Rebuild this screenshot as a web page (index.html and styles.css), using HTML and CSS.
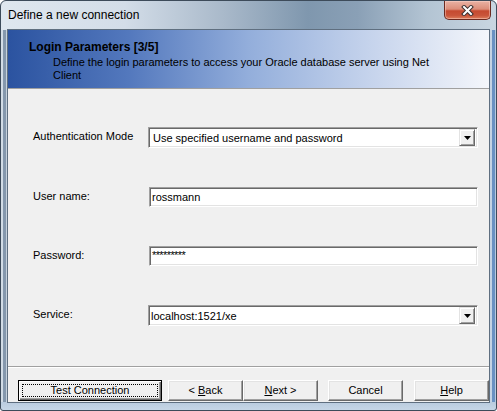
FILE: index.html
```html
<!DOCTYPE html>
<html>
<head>
<meta charset="utf-8">
<link rel="stylesheet" href="styles.css">
</head>
<body>
<div class="window">
  <div class="titlebar">
    <span class="title">Define a new connection</span>
    <div class="close">
      <svg width="13" height="11" viewBox="0 0 13 11">
        <path d="M3 2 L10 9 M10 2 L3 9" stroke="#3b3030" stroke-width="4" stroke-linecap="square" fill="none"/>
        <path d="M3 2 L10 9 M10 2 L3 9" stroke="#ffffff" stroke-width="2" stroke-linecap="square" fill="none"/>
      </svg>
    </div>
  </div>
  <div class="client">
    <div class="header">
      <div class="h-title">Login Parameters [3/5]</div>
      <div class="h-sub">Define the login parameters to access your Oracle database server using Net Client</div>
    </div>
    <div class="form">
      <div class="row">
        <span class="label">Authentication Mode</span>
        <div class="combo">
          <span class="value">Use specified username and password</span>
          <span class="drop"><svg width="7" height="4" viewBox="0 0 7 4"><polygon points="0,0 7,0 3.5,4" fill="#000"/></svg></span>
        </div>
      </div>
      <div class="row">
        <span class="label">User name:</span>
        <div class="edit"><span class="value">rossmann</span></div>
      </div>
      <div class="row">
        <span class="label">Password:</span>
        <div class="edit"><span class="value pw">*********</span></div>
      </div>
      <div class="row">
        <span class="label">Service:</span>
        <div class="combo">
          <span class="value svc">localhost:1521/xe</span>
          <span class="drop"><svg width="7" height="4" viewBox="0 0 7 4"><polygon points="0,0 7,0 3.5,4" fill="#000"/></svg></span>
        </div>
      </div>
    </div>
    <div class="sep"></div>
    <div class="buttons">
      <div class="btn default wide"><span class="focus">Test Connection</span></div>
      <div class="btn back"><span>&lt; <u>B</u>ack</span></div>
      <div class="btn"><span><u>N</u>ext &gt;</span></div>
      <div class="btn cancel"><span>Cancel</span></div>
      <div class="btn help"><span><u>H</u>elp</span></div>
    </div>
  </div>
</div>
</body>
</html>
```
FILE: styles.css
```css
* { box-sizing: border-box; }
html, body { margin: 0; padding: 0; }
body {
  width: 497px;
  height: 411px;
  overflow: hidden;
  font-family: "Liberation Sans", Arial, sans-serif;
  font-size: 11px;
  color: #000;
  background: #ffffff;
}

.window {
  width: 497px;
  height: 411px;
  border: 1px solid #3d4b5a;
  border-radius: 6px 6px 3px 3px;
  padding: 0 6px 7px 6px;
  display: flex;
  flex-direction: column;
  background:
    linear-gradient(to right, #dfe7ef 0%, #d3dde8 25%, #a9b9ca 45%, #7f97ae 62%, #8aa0b6 72%, #b3c4d3 86%, #c9d6e1 100%) top left / 100% 29px no-repeat,
    linear-gradient(to bottom, #b9cbde 0%, #c6d6e6 100%) bottom left / 100% 8px no-repeat,
    linear-gradient(to right, #d2dce6 0 2px, #8598ad 2px 5px, #c5d1dd 5px 6px, transparent 6px calc(100% - 6px), #c4d3e3 calc(100% - 6px) calc(100% - 4px), #6a91c2 calc(100% - 4px) calc(100% - 1px), #b7cae0 calc(100% - 1px)),
    #b9c8d7;
}

.titlebar {
  height: 28px;
  display: flex;
  align-items: flex-start;
}
.title {
  font-size: 12px;
  line-height: 14px;
  padding: 7px 0 0 1px;
  color: #000;
}
.close {
  margin-left: auto;
  margin-right: -1px;
  width: 47px;
  height: 19px;
  border: 1px solid #6b2a20;
  border-top: none;
  border-radius: 0 0 5px 5px;
  background: linear-gradient(to bottom, #e9b2a4 0%, #dc8e7a 45%, #c54a30 55%, #c9553a 80%, #dd7e5c 100%);
  box-shadow: inset 0 0 0 1px rgba(255, 220, 210, 0.45);
  display: flex;
  align-items: center;
  justify-content: center;
}

.client {
  flex: 1;
  border: 1px solid #5f6f80;
  background: #f0f0f0;
  display: flex;
  flex-direction: column;
}

.header {
  height: 59px;
  border-bottom: 1px solid #a0a0a0;
  background: linear-gradient(to right, #2b53a0 0%, #5378bd 25%, #93aedb 50%, #c5d3ec 75%, #f4f6fb 100%);
  padding: 10px 0 0 21px;
}
.h-title {
  font-weight: bold;
  font-size: 12px;
  line-height: 14px;
}
.h-sub {
  margin: 2px 0 0 24px;
  width: 378px;
  line-height: 13px;
}

.form {
  flex: 1;
  padding: 38px 0 0 25px;
  display: flex;
  flex-direction: column;
  gap: 39px;
}
.row {
  display: flex;
  align-items: center;
}
.label {
  width: 115px;
  line-height: 13px;
  padding-bottom: 2px;
}

.combo, .edit {
  background: #fff;
  border: 1px solid;
  border-color: #a0a0a0 #fff #fff #a0a0a0;
  box-shadow: inset 1px 1px 0 #696969, inset -1px -1px 0 #e3e3e3;
  display: flex;
  align-items: center;
}
.combo {
  width: 330px;
  height: 21px;
  padding: 2px 2px 2px 4px;
}
.edit {
  width: 329px;
  height: 20px;
  margin-left: 1px;
  padding: 2px 2px 2px 2px;
}
.value {
  line-height: 13px;
  padding-top: 1px;
}
.svc { margin-left: -2px; }
.pw {
  font-size: 11px;
  letter-spacing: -0.6px;
  align-self: flex-start;
  padding-top: 0;
}
.drop {
  margin-left: auto;
  width: 16px;
  height: 17px;
  background: #f0f0f0;
  border: 1px solid;
  border-color: #e3e3e3 #696969 #696969 #e3e3e3;
  box-shadow: inset 1px 1px 0 #fff, inset -1px -1px 0 #a0a0a0;
  display: flex;
  align-items: center;
  justify-content: center;
}

.sep {
  height: 2px;
  border-top: 1px solid #a0a0a0;
  border-bottom: 1px solid #fff;
}

.buttons {
  display: flex;
  padding: 12px 0 1px 10px;
}
.btn {
  width: 75px;
  height: 21px;
  background: #f0f0f0;
  border: 1px solid;
  border-color: #fff #696969 #696969 #fff;
  box-shadow: inset -1px -1px 0 #a0a0a0, inset 1px 1px 0 #e3e3e3;
  display: flex;
  align-items: center;
  justify-content: center;
  line-height: 13px;
}
.btn.wide { width: 144px; margin-right: 6px; }
.btn.default {
  border: 1px solid #000;
  box-shadow: inset 1px 1px 0 #fff, inset -1px -1px 0 #696969, inset -2px -2px 0 #a0a0a0;
  padding: 3px;
}
.focus {
  flex: 1;
  align-self: stretch;
  border: 1px dotted #000;
  display: flex;
  align-items: center;
  justify-content: center;
}
.cancel { margin-left: 10px; }
.help { margin-left: 11px; }
```
